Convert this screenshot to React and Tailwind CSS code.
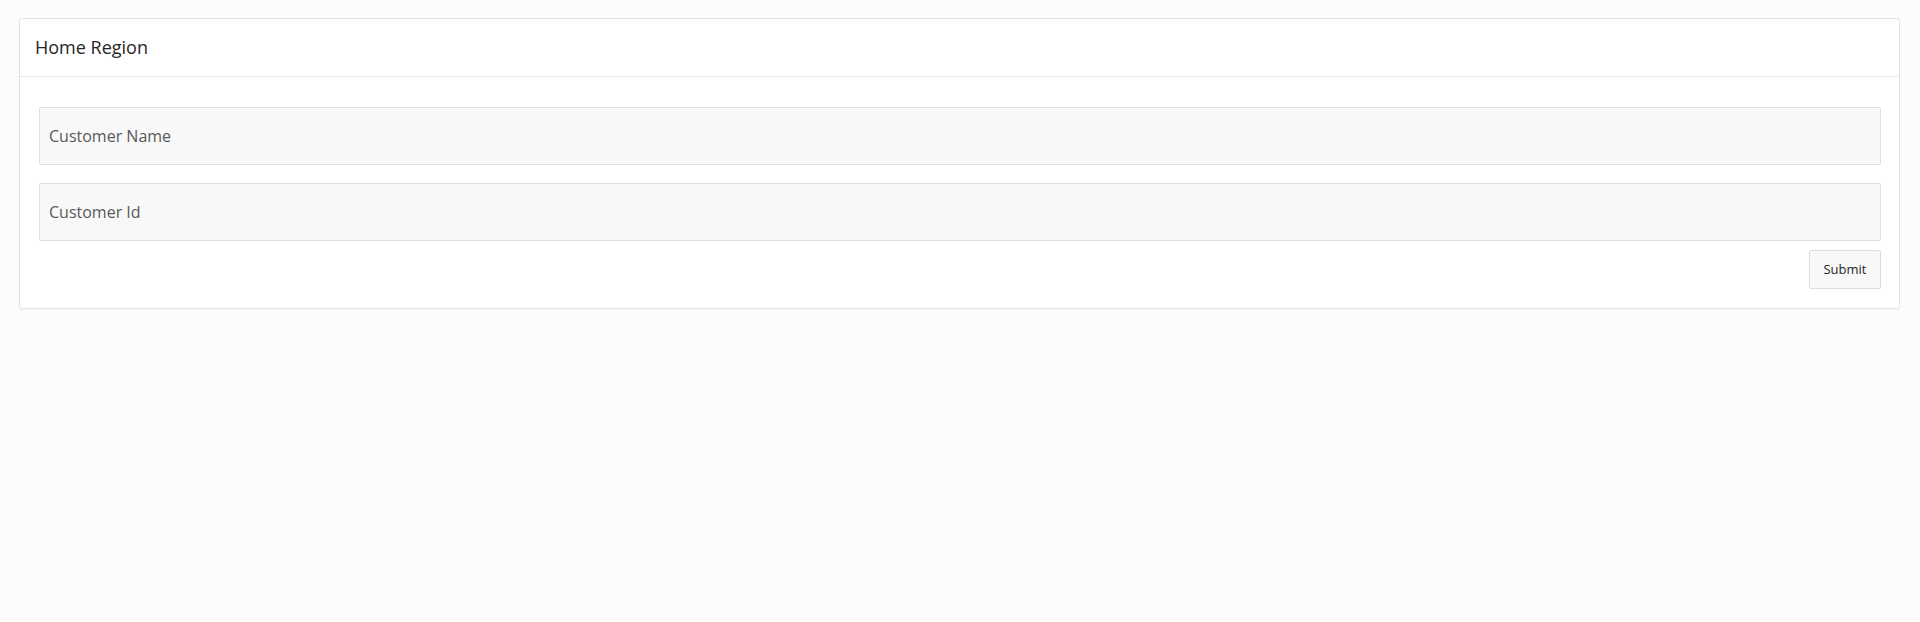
import React, { useState } from "react";

const App = () => {
  const [name, setName] = useState("");
  const [id, setId] = useState("");

  return (
    <div
      className="min-h-[622px] bg-[#fcfcfc] pt-[18px] pl-[19px] pr-[20px]"
      style={{ fontFamily: '"Open Sans", "Noto Sans", sans-serif' }}
    >
      {/* Region card */}
      <div className="bg-white border border-[#e3e3e3] rounded-[3px] shadow-[0_1px_2px_rgba(0,0,0,0.04)]">
        <div className="h-[58px] px-[15px] flex items-center border-b border-[#e8e8e8]">
          <h2 className="text-[18px] text-[#262626] font-normal">Home Region</h2>
        </div>

        <div className="pt-[30px] pb-[19px] pl-[19px] pr-[18px] flex flex-col">
          <input
            type="text"
            placeholder="Customer Name"
            value={name}
            onChange={(e) => setName(e.target.value)}
            className="h-[58px] w-full bg-[#f8f8f8] border border-[#dfdfdf] rounded-[2px] px-[9px] text-[16px] text-[#404040] placeholder:text-[#595959] focus:outline-none"
          />
          <input
            type="text"
            placeholder="Customer Id"
            value={id}
            onChange={(e) => setId(e.target.value)}
            className="mt-[18px] h-[58px] w-full bg-[#f8f8f8] border border-[#dfdfdf] rounded-[2px] px-[9px] text-[16px] text-[#404040] placeholder:text-[#595959] focus:outline-none"
          />
          <div className="flex justify-end mt-[9px]">
            <button className="h-[39px] w-[72px] bg-[#f8f8f8] border border-[#dcdcdc] rounded-[2px] text-[13px] text-[#262626]">
              Submit
            </button>
          </div>
        </div>
      </div>
    </div>
  );
};

export default App;
